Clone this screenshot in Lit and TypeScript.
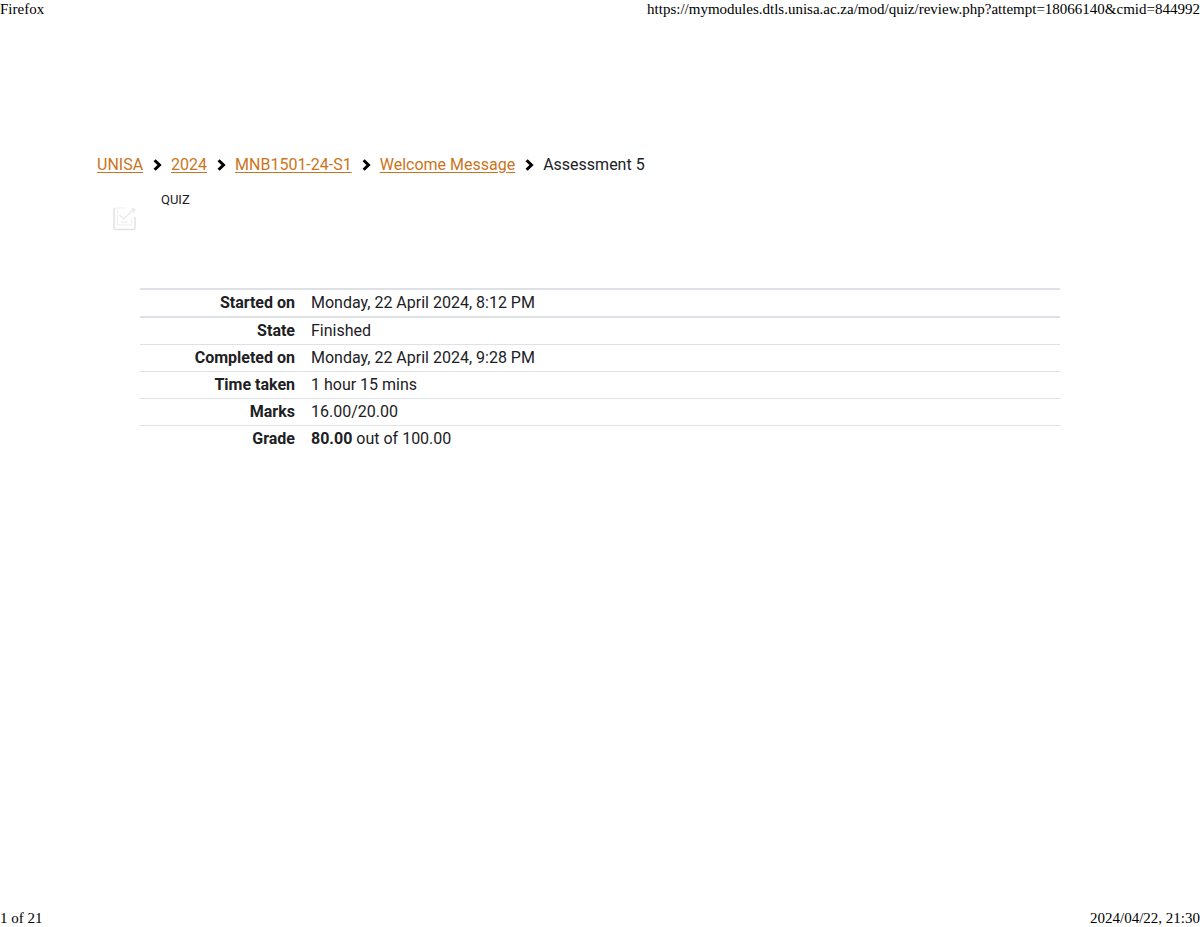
import { LitElement, html, css, svg } from "lit";
import { customElement } from "lit/decorators.js";

const crumbs = ["UNISA", "2024", "MNB1501-24-S1", "Welcome Message"];

const summary = [
  { label: "Started on", value: "Monday, 22 April 2024, 8:12 PM" },
  { label: "State", value: "Finished" },
  { label: "Completed on", value: "Monday, 22 April 2024, 9:28 PM" },
  { label: "Time taken", value: "1 hour 15 mins" },
  { label: "Marks", value: "16.00/20.00" },
  { label: "Grade", value: html`<b>80.00</b> out of 100.00` },
];

const chevron = html`<svg class="chevron" viewBox="0 0 9 12" aria-hidden="true">
  ${svg`<path d="M1.600 1.200 6.500 6 1.600 10.800" fill="none" stroke="#000" stroke-width="3" />`}
</svg>`;

@customElement("app-root")
export class AppRoot extends LitElement {
  static styles = css`
    :host {
      display: flex;
      flex-direction: column;
      box-sizing: border-box;
      min-height: 100vh;
      background: #fff;
      color: #1d2125;
      font: 16px/26px Roboto, "Liberation Sans", sans-serif;
    }
    .running {
      display: flex;
      justify-content: space-between;
      color: #000;
      font: 15px/18px "Liberation Serif", serif;
    }
    main {
      flex: 1;
      padding: 134px 97px 0;
    }
    .crumbs {
      display: flex;
      flex-wrap: wrap;
      margin: 0;
      padding: 0;
      list-style: none;
    }
    .crumb {
      display: flex;
      align-items: center;
    }
    .crumb a {
      color: #cb7420;
      text-decoration: underline;
      text-underline-offset: 2px;
    }
    .chevron {
      width: 9px;
      height: 12px;
      margin: 0 9px 0 10px;
    }
    .activity {
      display: flex;
      gap: 24px;
      padding: 12px 0 0 15px;
    }
    .quiz-icon {
      width: 25px;
      height: 26px;
      margin-top: 15px;
    }
    .kind {
      margin: 0;
      font-size: 13px;
      font-weight: 400;
      line-height: 20px;
      text-transform: uppercase;
    }
    .summary {
      width: calc(100% - 86px);
      margin: 57px 43px 0;
      border-spacing: 0;
    }
    .summary th,
    .summary td {
      padding: 0 8px;
      border-top: 1px solid #dee2e6;
      text-align: left;
    }
    .summary th {
      width: 147px;
      text-align: right;
      font-weight: 700;
    }
    .summary tr:nth-child(-n + 2) > * {
      border-top-width: 2px;
    }
  `;

  render() {
    return html`
      <header class="running">
        <span>Firefox</span>
        <span>https://mymodules.dtls.unisa.ac.za/mod/quiz/review.php?attempt=18066140&amp;cmid=844992</span>
      </header>
      <main>
        <nav aria-label="Breadcrumb">
          <ol class="crumbs">
            ${crumbs.map((c) => html`<li class="crumb"><a href="#">${c}</a>${chevron}</li>`)}
            <li class="crumb">Assessment 5</li>
          </ol>
        </nav>
        <section class="activity">
          <svg class="quiz-icon" viewBox="0 0 25 26" fill="none" aria-hidden="true">
            <path d="M2 3v19.500q0 2 2 2h17q2 0 2-2V12" stroke="#e2e2e2" stroke-width="1.500" />
            <path d="M5.500 4v16H19.500v-7M3 3h11" stroke="#efefef" />
            <path d="m7.500 10 4 4 4-3.500L22 4M19 4l4 0-2 4" stroke="#e9e9e9" stroke-width="1.200" />
            <path d="M9 17h7" stroke="#e8e8e8" />
          </svg>
          <h1 class="kind">Quiz</h1>
        </section>
        <table class="summary">
          <tbody>
            ${summary.map((r) => html`<tr><th scope="row">${r.label}</th><td>${r.value}</td></tr>`)}
          </tbody>
        </table>
      </main>
      <footer class="running">
        <span>1 of 21</span>
        <span>2024/04/22, 21:30</span>
      </footer>
    `;
  }
}
